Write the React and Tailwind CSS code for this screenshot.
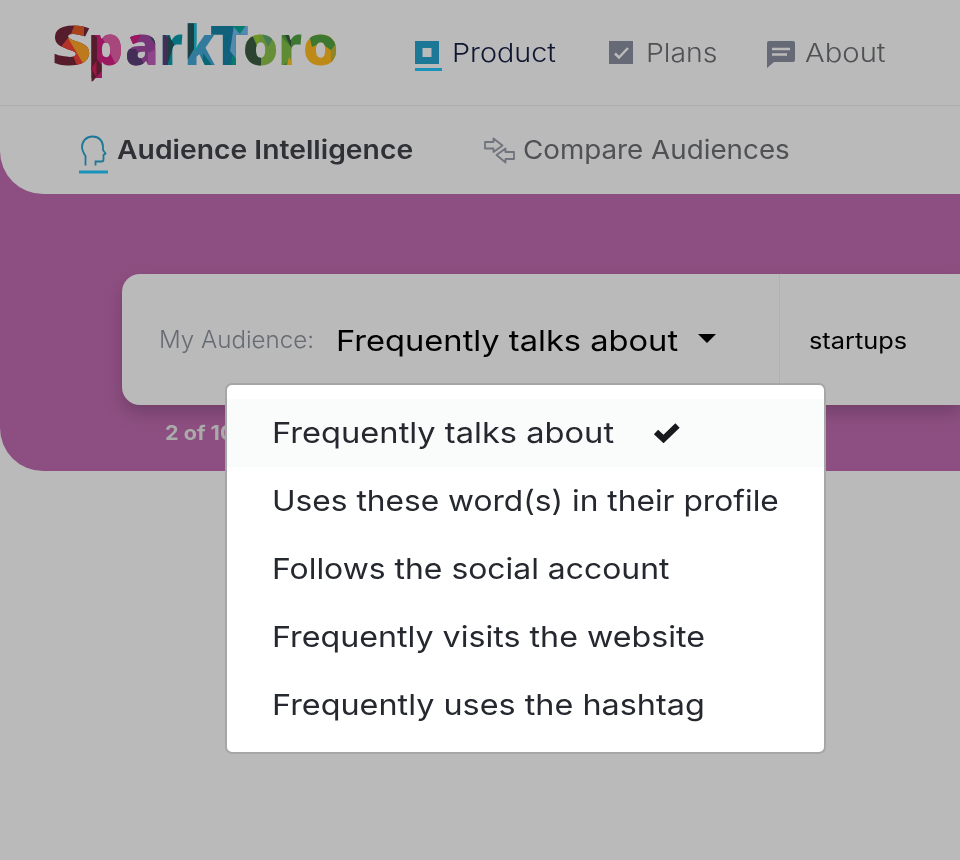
import { useLayoutEffect, useRef, useState } from "react";

// Stretches a single line of text so that it fills the width of its box.
function Fit({ className, children }) {
  const box = useRef(null);
  const text = useRef(null);
  const [scale, setScale] = useState(1);
  useLayoutEffect(() => {
    setScale(box.current.clientWidth / text.current.offsetWidth);
  }, []);
  return (
    <span ref={box} className={`block shrink-0 whitespace-nowrap ${className}`}>
      <span ref={text} className="inline-block origin-left" style={{ transform: `scaleX(${scale})` }}>
        {children}
      </span>
    </span>
  );
}

const letters = [
  { id: "s", ch: "S", x: 54, w: 34, base: "#571c2b", facets: [["#a9431c", "76,20 84,20 84,36 71,33"], ["#b5322a", "68,37 60,47 72,52 78,67 86,67 86,55"], ["#bd7a1d", "68,37 90,36 90,60 84,64"]] },
  { id: "p", ch: "p", x: 91.5, w: 31, base: "#9c1660", facets: [["#571c2b", "88,30 97,36 97,60 91,70 88,70"], ["#a8477b", "103,30 125,30 125,62 115,62 103,38"]] },
  { id: "a", ch: "a", x: 127, w: 29, base: "#783479", facets: [["#9c1660", "125,32 142,32 136,43 125,46"], ["#432e57", "125,48 136,48 146,67 125,67"], ["#8e4489", "156,48 158,67 148,67 148,52"], ["#1c4044", "150,36 158,38 158,47"]] },
  { id: "r", ch: "r", x: 163, w: 20, base: "#067381", facets: [["#432e57", "160,30 168,36 168,67 160,67"], ["#1c4044", "168,34 174,43 168,62"]] },
  { id: "k", ch: "k", x: 188, w: 28, base: "#327b9d", facets: [["#1c4044", "184,20 194,20 194,48 188,58 184,58"], ["#138e9f", "194,20 200,20 200,46 194,50"], ["#076674", "203,52 214,67 202,67"]] },
  { id: "t", ch: "T", x: 210.5, w: 37.5, base: "#10617c", facets: [["#528ab0", "234,24 250,24 250,36 238,36 238,60 230,50"], ["#067b70", "232,24 246,24 240,33"], ["#067b70", "232,54 238,60 238,67 231,67"]] },
  { id: "o1", ch: "o", x: 245, w: 32, base: "#668f37", facets: [["#2b4330", "243,32 253,36 261,54 261,67 243,67"], ["#719724", "253,32 261,32 258,45"], ["#477b51", "261,30 276,32 268,46"]] },
  { id: "r2", ch: "r", x: 282, w: 20, base: "#3d7830", facets: [["#5d8c35", "280,34 291,46 291,58 280,67"], ["#2b4330", "284,32 291,34 291,46"], ["#bd9119", "289,56 293,62 293,67 286,67"]] },
  { id: "o2", ch: "o", x: 305, w: 32, base: "#bd8a18", facets: [["#3d7830", "308,30 338,30 338,42 332,50 321,42 312,46"], ["#8c8628", "338,40 331,49 331,67 340,66"]] },
];

// Left bearing and ink width of each glyph, in em.
const inkWidth = { S: [0.035, 0.49], p: [0.07, 0.56], a: [0.035, 0.535], r: [0.07, 0.4], k: [0.07, 0.615], T: [0.015, 0.56], o: [0.04, 0.57] };

function Letter({ l }) {
  const [left, ink] = inkWidth[l.ch];
  const k = l.w / (ink * 54);
  return (
    <text
      transform={`translate(${l.x - left * 54 * k} 64.2) scale(${k} 1)`}
      fontSize="54"
      fontWeight="800"
      fontFamily='"Open Sans", "Noto Sans", sans-serif'
      fill={l.base}
    >
      {l.ch}
    </text>
  );
}

function Logo() {
  return (
    <svg className="-ml-px -mt-[2px] block shrink-0" width="300" height="86" viewBox="46 8 300 86">
      <defs>
        {letters.map((l) => (
          <clipPath id={`clip-${l.id}`} key={l.id}>
            <Letter l={l} />
          </clipPath>
        ))}
      </defs>
      {letters.map((l) => (
        <g key={l.id}>
          <Letter l={l} />
          <g clipPath={`url(#clip-${l.id})`}>
            {l.facets.map(([fill, points], i) => (
              <polygon key={i} fill={fill} points={points} />
            ))}
          </g>
        </g>
      ))}
      <path d="M91.500 66L97 58L101.500 64V70L93 80Q91.500 81 91.500 79.500Z" fill="#571c2b" />
      <path d="M91.500 67L96.500 60V76L92.500 70Z" fill="#9c1648" />
    </svg>
  );
}

const options = [
  { label: "Frequently talks about", width: "w-[342px]", selected: true },
  { label: "Uses these word(s) in their profile", width: "w-[507px]" },
  { label: "Follows the social account", width: "w-[398px]" },
  { label: "Frequently visits the website", width: "w-[433px]" },
  { label: "Frequently uses the hashtag", width: "w-[433px]" },
];

export default function App() {
  return (
    <div className="relative h-[860px] w-[960px] overflow-hidden bg-[#bababa] font-['Inter',sans-serif] text-[#25282e]">
      <div className="h-[471px] rounded-bl-[43px] bg-[#8d4f81]">
        <header className="h-[194px] rounded-bl-[43px] bg-[#bababa]">
          <nav className="flex h-[106px] items-center border-b border-[#aeaeae] pl-[47px] text-[26px] text-[#505154]">
            <Logo />
            <a className="ml-[69px] mt-[6px] flex items-center text-[#111631]">
              <span className="flex h-[30px] w-[27px] flex-col justify-between">
                <svg width="24" height="23" viewBox="0 0 24 23">
                  <path fill="#1d7897" fillRule="evenodd" d="M0 0H24V23H0ZM7.500 7V16H16.500V7Z" />
                </svg>
                <span className="h-[3px] bg-[#1a93ba]" />
              </span>
              <Fit className="-mt-[7px] ml-[10px] w-[104px] font-[350]">Product</Fit>
            </a>
            <a className="-mt-px ml-[53px] flex items-center">
              <svg width="24" height="23" viewBox="0 0 24 23">
                <path fill="#666a76" d="M0 0H24V23H0Z" />
                <path d="M6 12.500L10 16.500L19 7" fill="none" stroke="#bababa" strokeWidth="2.500" />
              </svg>
              <Fit className="ml-[13px] w-[71px] font-[350]">Plans</Fit>
            </a>
            <a className="-mt-px ml-[50px] flex items-center">
              <svg className="mt-1" width="28" height="27" viewBox="0 0 28 27">
                <path fill="#666a76" d="M2 0H26Q28 0 28 2V19Q28 21 26 21H7L0 27V2Q0 0 2 0Z" />
                <path d="M5 8H23M5 13.500H20" fill="none" stroke="#bababa" strokeWidth="2.500" />
              </svg>
              <Fit className="ml-[10px] w-[81px] font-[350]">About</Fit>
            </a>
          </nav>
          <div className="flex h-[88px] items-center pl-[79px] text-[26px]">
            <svg className="mt-[9px]" width="29" height="40" viewBox="0 0 29 40">
              <path d="M6.500 30.500V21C4.500 18 3 15.500 3 12C3 6 7.500 1.500 13.500 1.500C20 1.500 24 6 24 12V15L26.500 18.500L24.500 20V24.500Q24.500 26.500 22.500 26.500H16.500V30.500" fill="none" stroke="#1d7897" strokeWidth="1.800" />
              <path d="M0 37H29" stroke="#1a93ba" strokeWidth="3" />
            </svg>
            <Fit className="-mt-[2px] ml-[9px] w-[296px] font-semibold text-[#303136]">Audience Intelligence</Fit>
            <svg className="ml-[71px] mt-px" width="31" height="27" viewBox="0 0 31 27" fill="none" stroke="#70747c" strokeWidth="1.800" strokeLinejoin="round">
              <path d="M1 5H9.500V1.500L18.500 8.500L9.500 15V11.500H1Z" />
              <path d="M30 15H21.500V11.500L12.500 18L21.500 25.500V22H30Z" />
            </svg>
            <Fit className="-mt-[2px] ml-[8px] w-[267px] text-[#505154]">Compare Audiences</Fit>
          </div>
        </header>
        <section className="pl-[122px] pt-20">
          <div className="flex h-[131px] items-center rounded-l-[18px] bg-[#bababa] shadow-[0_8px_16px_#73416a]">
            <div className="flex h-full w-[658px] items-center border-r border-[#b0b0b0] pl-[37px]">
              <Fit className="mt-px w-[155px] text-[23.500px] font-light text-[#676b72]">My Audience:</Fit>
              <Fit className="ml-[22px] mt-[3px] w-[342px] text-[29px] font-[380] text-black">Frequently talks about</Fit>
              <svg className="-mt-[2px] ml-[20px]" width="18" height="10" viewBox="0 0 18 10">
                <path d="M0 0H18L9 9Z" fill="black" />
              </svg>
            </div>
            <Fit className="ml-[29px] mt-[4px] w-[98px] text-[23px] text-black">startups</Fit>
          </div>
          <Fit className="ml-[43px] mt-[13px] w-[69px] text-[20px] font-bold text-[#aaaaaa]">2 of 10</Fit>
        </section>
      </div>

      <div className="absolute left-[225px] top-[383px] h-[371px] w-[601px] rounded-[7px] border-2 border-[#a5a7a7] bg-white pt-[14px] text-[29px]">
        {options.map((o) => (
          <div key={o.label} className={`flex h-[68px] items-center pl-[45px] ${o.selected ? "bg-[#fafbfb]" : ""}`}>
            <Fit className={`-mt-px font-[380] ${o.width}`}>{o.label}</Fit>
            {o.selected && (
              <svg className="-mt-[3px] ml-[39px]" width="28" height="22" viewBox="0 0 28 22">
                <path d="M3 11L10.500 18L24.500 4.500" fill="none" stroke="#17191d" strokeWidth="6.200" />
              </svg>
            )}
          </div>
        ))}
      </div>
    </div>
  );
}
